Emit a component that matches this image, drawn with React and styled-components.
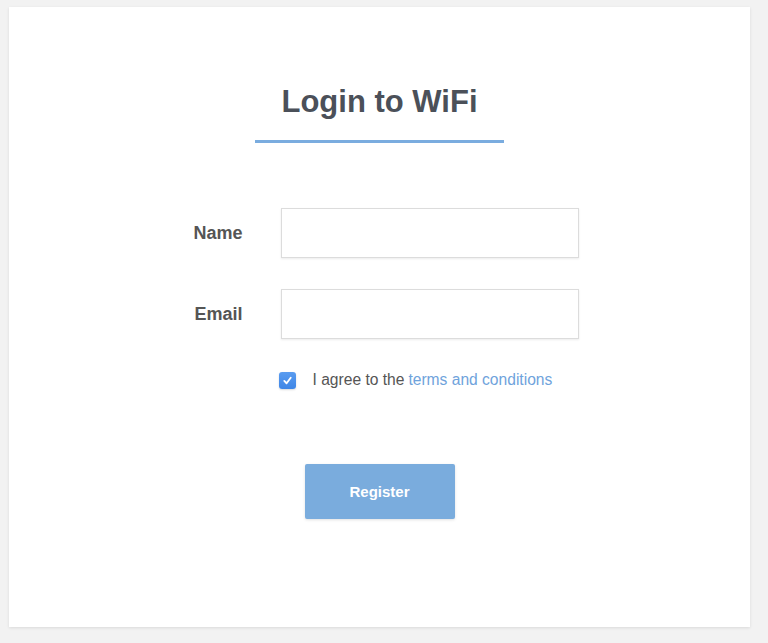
import styled, { createGlobalStyle } from "styled-components";

const GlobalStyle = createGlobalStyle`
  html, body {
    margin: 0;
    padding: 0;
    background: #f2f2f2;
  }
  * {
    box-sizing: border-box;
  }
`;

const Page = styled.div`
  padding: 7px 18px 16px 9px;
  font-family: "Liberation Sans", Arial, sans-serif;
`;

const Card = styled.main`
  background: #fff;
  height: 620px;
  box-shadow: 0 1px 3px rgba(0, 0, 0, 0.1);
  display: flex;
  flex-direction: column;
  align-items: center;
  padding-top: 77px;
`;

const Title = styled.h1`
  width: 249px;
  margin: 0;
  padding-bottom: 20px;
  border-bottom: 3px solid #7aacdf;
  text-align: center;
  font-size: 31px;
  line-height: 36px;
  font-weight: 700;
  color: #4b5059;
`;

const Form = styled.form`
  margin-top: 65px;
  display: grid;
  grid-template-columns: 62px 298px;
  column-gap: 38px;
  row-gap: 31px;
  align-items: center;
`;

const Label = styled.label`
  justify-self: end;
  font-size: 18px;
  font-weight: 700;
  color: #555;
`;

const Input = styled.input`
  width: 298px;
  height: 50px;
  border: 1px solid #dcdcdc;
  box-shadow: 0 1px 2px rgba(0, 0, 0, 0.08);
  background: #fff;
  outline: none;
  padding: 0 12px;
  font-size: 15px;
`;

const AgreeRow = styled.label`
  grid-column: 2;
  display: flex;
  align-items: center;
  height: 22px;
  margin: -1px 0 0 -2px;
  font-size: 15.6px;
  color: #555;
`;

const CheckBox = styled.span`
  width: 17px;
  height: 17px;
  border-radius: 3px;
  background: linear-gradient(#5a9cf0, #3f86e6);
  box-shadow: 0 1px 2px rgba(0, 0, 0, 0.15);
  display: flex;
  align-items: center;
  justify-content: center;
  margin-right: 17px;
`;

const Link = styled.a`
  color: #6fa3dc;
  text-decoration: none;
  margin-left: 4px;
`;

const Button = styled.button`
  grid-column: 1 / -1;
  justify-self: center;
  margin-top: 42px;
  width: 150px;
  height: 55px;
  border: none;
  border-radius: 2px;
  background: #7aacdd;
  box-shadow: 0 1px 3px rgba(0, 0, 0, 0.12);
  color: #fff;
  font-family: "Liberation Sans", Arial, sans-serif;
  font-size: 15px;
  font-weight: 700;
  cursor: pointer;
`;

export default function App() {
  return (
    <>
      <GlobalStyle />
      <Page>
        <Card>
          <Title>Login to WiFi</Title>
          <Form onSubmit={(e) => e.preventDefault()}>
            <Label htmlFor="name">Name</Label>
            <Input id="name" type="text" />
            <Label htmlFor="email">Email</Label>
            <Input id="email" type="email" />
            <AgreeRow>
              <CheckBox>
                <svg width="11" height="11" viewBox="0 0 12 12">
                  <polyline
                    points="2.5,6.5 5,9 9.5,3"
                    fill="none"
                    stroke="#fff"
                    strokeWidth="2"
                    strokeLinecap="round"
                    strokeLinejoin="round"
                  />
                </svg>
              </CheckBox>
              I agree to the<Link href="#">terms and conditions</Link>
            </AgreeRow>
            <Button type="submit">Register</Button>
          </Form>
        </Card>
      </Page>
    </>
  );
}
